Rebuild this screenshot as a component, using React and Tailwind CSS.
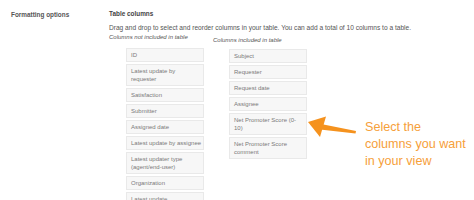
import React from "react";

// line breaks follow the reference's wrapping
const notIncluded = [
    "ID",
    "Latest update by\nrequester",
    "Satisfaction",
    "Submitter",
    "Assigned date",
    "Latest update by assignee",
    "Latest updater type\n(agent/end-user)",
    "Organization",
    "Latest update",
];

const included = [
    "Subject",
    "Requester",
    "Request date",
    "Assignee",
    "Net Promoter Score (0-\n10)",
    "Net Promoter Score\ncomment",
];

const ColumnBox = ({ label }) => (
    <div className="w-[78px] whitespace-pre border border-[#e9e9e9] bg-[#f7f7f7] px-[4px] py-[2px] text-[6px] leading-[8px] text-[#7a7a7a]">
        {label}
    </div>
);

const App = () => {
    return (
        <div
            className="relative w-[474px] h-[200px] overflow-hidden bg-white flex"
            style={{ fontFamily: '"Liberation Sans", Arial, sans-serif' }}
        >
            <div className="w-[109px] pl-[11px] pt-[10px] text-[6.4px] font-bold text-[#555]">
                Formatting options
            </div>
            <div className="flex-1 pt-[10px]">
                <div className="text-[6.4px] font-bold leading-[8px] text-[#444]">Table columns</div>
                <div className="mt-[5px] text-[6.6px] leading-[9px] text-[#555] whitespace-nowrap">
                    Drag and drop to select and reorder columns in your table. You can add a total of 10 columns to a table.
                </div>
                <div className="flex mt-[1px]">
                    <div className="w-[104px]">
                        <div className="text-[6px] italic leading-[8px] text-[#555]">Columns not included in table</div>
                        <div className="mt-[7px] ml-[17px] flex flex-col gap-[2px]">
                            {notIncluded.map((c) => (
                                <ColumnBox key={c} label={c} />
                            ))}
                        </div>
                    </div>
                    <div className="pt-[3px]">
                        <div className="text-[6px] italic leading-[8px] text-[#555]">Columns included in table</div>
                        <div className="mt-[5px] ml-[16px] flex flex-col gap-[2px]">
                            {included.map((c) => (
                                <ColumnBox key={c} label={c} />
                            ))}
                        </div>
                    </div>
                </div>
            </div>

            <svg className="absolute left-0 top-0" width="474" height="200" viewBox="0 0 474 200">
                <polygon points="308,122 326,116.5 320,137" fill="#f5921e" />
                <polygon points="321,124 356,131 355.5,133.5 320,129.5" fill="#f5921e" />
            </svg>

            <div className="absolute left-[365px] top-[119px] text-[12.6px] leading-[17px] text-[#f6a03a]">
                Select the
                <br />
                columns you want
                <br />
                in your view
            </div>
        </div>
    );
};

export default App;
